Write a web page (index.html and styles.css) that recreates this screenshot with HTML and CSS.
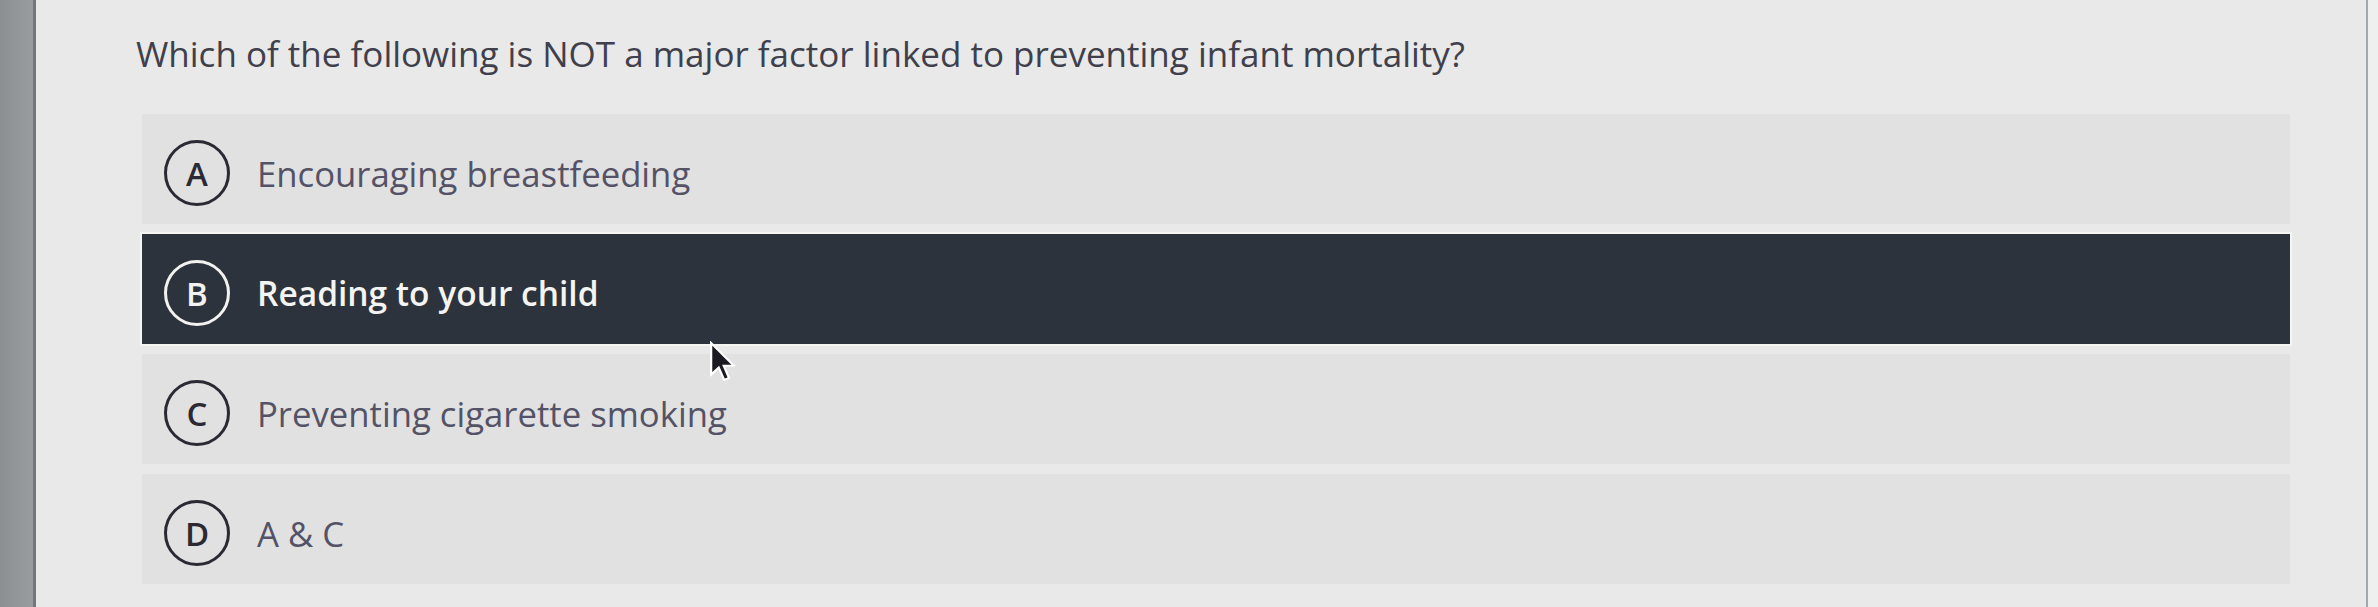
FILE: index.html
```html
<!DOCTYPE html>
<html>
<head>
  <title>Question</title>
  <link rel="stylesheet" href="styles.css">
</head>
<body>
  <div class="screen">
    <div class="bezel"></div>
    <div class="main">
      <div class="question">Which of the following is NOT a major factor linked to preventing infant mortality?</div>
      <div class="options">
        <div class="option">
          <span class="letter">A</span>
          <span class="label">Encouraging breastfeeding</span>
        </div>
        <div class="option selected">
          <span class="letter">B</span>
          <span class="label">Reading to your child</span>
        </div>
        <div class="option">
          <span class="letter">C</span>
          <span class="label">Preventing cigarette smoking</span>
        </div>
        <div class="option">
          <span class="letter">D</span>
          <span class="label">A &amp; C</span>
        </div>
      </div>
    </div>
    <div class="edge"></div>
  </div>
  <svg class="cursor" xmlns="http://www.w3.org/2000/svg" width="26" height="42" viewBox="0 0 12 20" preserveAspectRatio="none">
    <path d="M1 1L1 16L4.5 12.6L7 18.5L9.2 17.6L6.8 11.8L11.5 11.8Z" fill="#1d1b22" stroke="#ffffff" stroke-width="1"/>
  </svg>
</body>
</html>
```

FILE: styles.css
```css
body {
  margin: 0;
  padding: 0;
  background-color: #e8e9e8;
  font-family: 'Open Sans', 'Noto Sans', sans-serif;
  width: 2378px;
  height: 607px;
  overflow: hidden;
  position: relative;
}
.screen {
  display: flex;
  height: 607px;
}
.bezel {
  width: 33px;
  flex-shrink: 0;
  background: linear-gradient(to right, #8c8f92, #9a9da0);
  border-right: 3px solid #74777b;
}
.main {
  flex: 1;
  padding: 32px 76px 0 100px;
}
.question {
  font-size: 35px;
  line-height: 44px;
  color: #403f4c;
}
.options {
  margin: 38px 0 0 6px;
  display: flex;
  flex-direction: column;
  gap: 10px;
}
.option {
  height: 110px;
  padding: 8px 0 0 22px;
  box-sizing: border-box;
  background-color: #e0e1e0;
  display: flex;
  align-items: center;
}
.option.selected {
  background-color: #2d333c;
  box-shadow: 0 0 0 2px #f5f5f2;
  color: #ffffff;
}
.letter {
  width: 60px;
  height: 60px;
  border: 3px solid #2b2934;
  border-radius: 50%;
  display: flex;
  align-items: center;
  justify-content: center;
  font-size: 33px;
  font-weight: 600;
  color: #2b2934;
  margin-right: 27px;
  flex-shrink: 0;
}
.label {
  font-size: 34.7px;
  color: #545266;
}
.selected .letter {
  border-color: #f2f2f0;
  color: #f2f2f0;
}
.selected .label {
  color: #f4f4f2;
  font-weight: 600;
  font-size: 33.5px;
}
.edge {
  width: 10px;
  flex-shrink: 0;
  border-left: 2px solid #a3a8af;
  background-color: #eef0ef;
}
.cursor {
  position: absolute;
  left: 709px;
  top: 341px;
}
```
